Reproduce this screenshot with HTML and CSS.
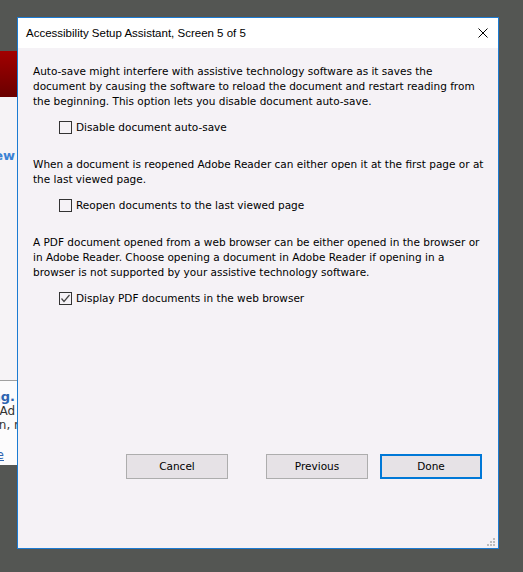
FILE: index.html
```html
<!DOCTYPE html>
<html lang="en">
<head>
<meta charset="utf-8">
<title>Accessibility Setup Assistant</title>
<link rel="stylesheet" href="styles.css">
</head>
<body>
<div class="screen">
  <div class="backdrop">
    <div class="bd-top"></div>
    <div class="bd-banner"></div>
    <div class="bd-doc">
      <div class="bd-row bd-head"><span>View</span></div>
      <div class="bd-rule"></div>
      <div class="bd-lower">
        <div class="bd-row bd-link"><span>Getting started using.</span></div>
        <div class="bd-row bd-line"><span>with Ad</span></div>
        <div class="bd-row bd-line"><span class="bd-under">information, r</span></div>
        <div class="bd-row bd-more"><span>More</span></div>
      </div>
    </div>
  </div>

  <div class="dialog">
    <div class="titlebar">
      <span class="title">Accessibility Setup Assistant, Screen 5 of 5</span>
      <svg class="close" width="10" height="10" viewBox="0 0 10 10">
        <path d="M0.5 0.5 L9.5 9.5 M9.5 0.5 L0.5 9.5" stroke="#000" stroke-width="1" fill="none"/>
      </svg>
    </div>

    <div class="content">
      <p class="para">Auto-save might interfere with assistive technology software as it saves the<br>document by causing the software to reload the document and restart reading from<br>the beginning. This option lets you disable document auto-save.</p>
      <label class="option"><span class="box"></span>Disable document auto-save</label>

      <p class="para">When a document is reopened Adobe Reader can either open it at the first page or at<br>the last viewed page.</p>
      <label class="option"><span class="box"></span>Reopen documents to the last viewed page</label>

      <p class="para">A PDF document opened from a web browser can be either opened in the browser or<br>in Adobe Reader. Choose opening a document in Adobe Reader if opening in a<br>browser is not supported by your assistive technology software.</p>
      <label class="option"><span class="box"><svg width="11" height="11" viewBox="0 0 11 11"><polyline points="1.5,5.5 4,8.5 9.5,2" fill="none" stroke="#444" stroke-width="1.2"/></svg></span>Display PDF documents in the web browser</label>
    </div>

    <div class="footer">
      <button class="btn">Cancel</button>
      <button class="btn btn-prev">Previous</button>
      <button class="btn btn-default">Done</button>
    </div>

    <svg class="grip" width="9" height="9" viewBox="0 0 9 9">
      <rect x="7" y="1" width="2" height="2" fill="#bdbdbd"/>
      <rect x="4" y="4" width="2" height="2" fill="#bdbdbd"/>
      <rect x="7" y="4" width="2" height="2" fill="#bdbdbd"/>
      <rect x="1" y="7" width="2" height="2" fill="#bdbdbd"/>
      <rect x="4" y="7" width="2" height="2" fill="#bdbdbd"/>
      <rect x="7" y="7" width="2" height="2" fill="#bdbdbd"/>
    </svg>
  </div>
</div>
</body>
</html>
```

FILE: styles.css
```css
html, body {
  margin: 0;
  padding: 0;
}

body {
  width: 523px;
  height: 572px;
  overflow: hidden;
  background: #545653;
  font-family: "DejaVu Sans", Tahoma, sans-serif;
  font-size: 10.5px;
  color: #000;
}

.screen {
  display: flex;
  align-items: flex-start;
  height: 572px;
}

/* window peeking out behind the dialog */
.backdrop {
  flex: none;
  width: 17px;
  display: flex;
  flex-direction: column;
  overflow: hidden;
}

.bd-top {
  height: 51px;
}

.bd-banner {
  height: 46px;
  background: linear-gradient(#a20000, #6a0000);
}

.bd-doc {
  height: 368px;
  display: flex;
  flex-direction: column;
  background: #f6f3f6;
}

/* lines of the page behind: their text runs off both edges */
.bd-row {
  display: flex;
  justify-content: flex-end;
  white-space: nowrap;
  padding-right: 2px;
}

.bd-row span {
  flex: none;
}

.bd-head {
  margin-top: 49px;
  height: 20px;
  font: bold 13px/20px "DejaVu Sans", sans-serif;
  color: #3b82d4;
}

.bd-rule {
  margin-top: 214px;
  height: 1px;
  background: #a0a0a0;
}

.bd-lower {
  flex: 1;
  background: #fcfbfc;
  padding-top: 9px;
}

.bd-link {
  height: 14px;
  font: bold 13px/14px "DejaVu Sans", sans-serif;
  color: #2e64b0;
}

.bd-line {
  height: 14px;
  font: 12px/14px "DejaVu Sans", sans-serif;
  color: #333;
}

.bd-under {
  margin-right: -4px;
}

.bd-more {
  margin-top: 16px;
  height: 14px;
  font: 12px/14px "DejaVu Sans", sans-serif;
  color: #2e64b0;
  text-decoration: underline;
}

.bd-more span {
  margin-right: 11px;
}

/* dialog */
.dialog {
  position: relative;
  flex: none;
  margin-top: 17px;
  width: 480px;
  height: 530px;
  border: 1px solid #1c7bd2;
  background: #f5f2f6;
  display: flex;
  flex-direction: column;
}

.titlebar {
  flex: none;
  height: 30px;
  background: #fff;
  display: flex;
  align-items: center;
  padding: 0 10px 0 8px;
}

.title {
  flex: 1;
  font-family: "Liberation Sans", Arial, sans-serif;
  font-size: 11.5px;
}

.close {
  display: block;
}

.content {
  flex: 1;
  padding: 16px 15px 0 15px;
}

.para {
  margin: 0 0 11px;
  line-height: 15px;
  white-space: nowrap;
}

.option {
  display: flex;
  align-items: center;
  height: 15px;
  margin: 0 0 22px 26px;
  line-height: 15px;
}

.box {
  flex: none;
  width: 11px;
  height: 11px;
  border: 1px solid #333;
  margin-right: 4px;
  display: flex;
  align-items: center;
  justify-content: center;
}

.box svg {
  display: block;
}

.footer {
  flex: none;
  display: flex;
  padding: 0 16px 69px 108px;
}

.btn {
  width: 102px;
  height: 25px;
  margin: 0;
  padding: 0 0 2px;
  border: 1px solid #adadad;
  background: #e6e2e6;
  font-family: inherit;
  font-size: 10.5px;
  color: #000;
}

.btn-prev {
  margin-left: auto;
  margin-right: 12px;
}

.btn-default {
  border: 2px solid #0078d7;
}

.grip {
  position: absolute;
  right: 3px;
  bottom: 2px;
}
```
